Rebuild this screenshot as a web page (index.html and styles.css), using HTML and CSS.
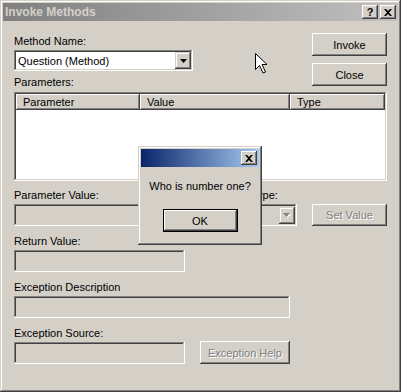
FILE: index.html
```html
<!DOCTYPE html>
<html lang="en">
<head>
  <meta charset="UTF-8" />
  <title>Invoke Methods</title>
  <link rel="stylesheet" href="styles.css">
</head>
<body>
  <div class="window">
    <div class="titlebar">
      <span class="title">Invoke Methods</span>
      <div class="capBtns">
        <span class="capBtn help">?</span>
        <span class="capBtn">
          <svg width="8" height="7" viewBox="0 0 8 7"><path d="M0 0h2l2 2 2-2h2L5 3.5 8 7H6L4 5 2 7H0l3-3.5z" fill="#000"/></svg>
        </span>
      </div>
    </div>

    <div class="content">
      <div class="topRow">
        <div class="topLeft">
          <span class="lbl">Method Name:</span>
          <div class="combo method">
            <span class="comboText">Question (Method)</span>
            <span class="dropBtn"><svg width="7" height="4" viewBox="0 0 7 4"><path d="M0 0h7L3.5 4z" fill="#000"/></svg></span>
          </div>
          <span class="lbl paramsLbl">Parameters:</span>
        </div>
        <div class="topRight">
          <button class="btn">Invoke</button>
          <button class="btn">Close</button>
        </div>
      </div>

      <div class="listview">
        <div class="lvHeader">
          <span class="lvCol colParam">Parameter</span>
          <span class="lvCol colValue">Value</span>
          <span class="lvCol colType">Type</span>
        </div>
      </div>

      <div class="row valueRow">
        <div class="group">
          <span class="lbl">Parameter Value:</span>
          <div class="field paramField"></div>
        </div>
        <div class="group typeGroup">
          <span class="lbl">Type:</span>
          <div class="combo typeCombo">
            <span class="comboText"></span>
            <span class="dropBtn"><svg width="8" height="5" viewBox="0 0 8 5"><path d="M1 1h7L4.5 5z" fill="#fff"/><path d="M0 0h7L3.5 4z" fill="#808080"/></svg></span>
          </div>
        </div>
        <button class="btn disabled pushRight">Set Value</button>
      </div>

      <div class="row">
        <div class="group">
          <span class="lbl">Return Value:</span>
          <div class="field shortField"></div>
        </div>
      </div>

      <div class="row">
        <div class="group">
          <span class="lbl">Exception Description</span>
          <div class="field longField"></div>
        </div>
      </div>

      <div class="row">
        <div class="group">
          <span class="lbl">Exception Source:</span>
          <div class="field shortField"></div>
        </div>
        <button class="btn disabled helpBtn">Exception Help</button>
      </div>
    </div>

    <div class="msgbox">
      <div class="msgTitle">
        <span class="capBtn">
          <svg width="8" height="7" viewBox="0 0 8 7"><path d="M0 0h2l2 2 2-2h2L5 3.5 8 7H6L4 5 2 7H0l3-3.5z" fill="#000"/></svg>
        </span>
      </div>
      <div class="msgText">Who is number one?</div>
      <button class="btn okBtn">OK</button>
    </div>

    <svg class="cursor" width="13" height="21" viewBox="0 0 13 21">
      <path d="M0.5 0.5v16l4-4 3.5 7.5 2.5-1-3.5-7.5h5z" fill="#fff" stroke="#000" stroke-width="1"/>
    </svg>
  </div>
</body>
</html>
```

FILE: styles.css
```css
* {
  box-sizing: border-box;
}

body {
  margin: 0;
  font-family: "Liberation Sans", Arial, sans-serif;
  font-size: 11px;
  color: #000;
  background-color: #d4d0c8;
}

/* bevels */
.window,
.msgbox {
  box-shadow: inset -1px -1px #404040, inset 1px 1px #d4d0c8, inset -2px -2px #808080, inset 2px 2px #fff;
}

.window {
  position: relative;
  width: 401px;
  height: 392px;
  padding: 3px;
  background-color: #d4d0c8;
}

.titlebar {
  display: flex;
  justify-content: space-between;
  align-items: flex-start;
  height: 18px;
  padding: 2px 2px 0 2px;
  background: linear-gradient(to right, #808080, #c0c0c0);
}
.title {
  color: #d4d0c8;
  font-weight: bold;
  font-size: 12px;
  line-height: 14px;
}
.capBtns {
  display: flex;
  gap: 2px;
}
.capBtn {
  display: flex;
  align-items: center;
  justify-content: center;
  width: 16px;
  height: 14px;
  background-color: #d4d0c8;
  box-shadow: inset -1px -1px #404040, inset 1px 1px #fff, inset -2px -2px #808080;
}
.capBtn.help {
  font-weight: bold;
  font-size: 11px;
  line-height: 14px;
}

.content {
  padding: 0 11px;
}

.lbl {
  display: block;
  height: 13px;
  line-height: 13px;
  white-space: nowrap;
}

.topRow {
  display: flex;
  justify-content: space-between;
  align-items: flex-start;
}
.topLeft {
  padding-top: 14px;
}
.topRight {
  display: flex;
  flex-direction: column;
  gap: 7px;
  padding-top: 12px;
}
.paramsLbl {
  margin-top: 5px;
}

.combo {
  display: flex;
  align-items: center;
  height: 21px;
  margin-top: 2px;
  padding: 2px;
  background-color: #fff;
  box-shadow: inset -1px -1px #fff, inset 1px 1px #808080, inset -2px -2px #d4d0c8, inset 2px 2px #404040;
}
.combo.method {
  width: 179px;
}
.comboText {
  flex: 1;
  padding-left: 2px;
  white-space: nowrap;
}
.dropBtn {
  display: flex;
  align-items: center;
  justify-content: center;
  width: 16px;
  height: 17px;
  background-color: #d4d0c8;
  box-shadow: inset -1px -1px #404040, inset 1px 1px #d4d0c8, inset -2px -2px #808080, inset 2px 2px #fff;
}

.btn {
  width: 75px;
  height: 23px;
  padding: 0;
  border: none;
  font: inherit;
  color: #000;
  background-color: #d4d0c8;
  box-shadow: inset -1px -1px #404040, inset 1px 1px #fff, inset -2px -2px #808080, inset 2px 2px #d4d0c8;
}
.btn.disabled {
  color: #808080;
  text-shadow: 1px 1px #fff;
}

.listview {
  height: 89px;
  margin-top: 3px;
  padding: 2px;
  background-color: #fff;
  box-shadow: inset -1px -1px #fff, inset 1px 1px #808080, inset -2px -2px #d4d0c8, inset 2px 2px #404040;
}
.lvHeader {
  display: flex;
  height: 16px;
}
.lvCol {
  height: 16px;
  padding-left: 7px;
  line-height: 16px;
  background-color: #d4d0c8;
  box-shadow: inset -1px -1px #404040, inset 1px 1px #fff, inset -2px -2px #808080;
}
.colParam {
  width: 124px;
}
.colValue {
  width: 150px;
}
.colType {
  width: 95px;
}

.row {
  display: flex;
  align-items: flex-end;
  margin-top: 9px;
}
.valueRow {
  margin-top: 8px;
}
.group .lbl {
  margin-bottom: 2px;
}

.field {
  height: 22px;
  background-color: #d4d0c8;
  box-shadow: inset -1px -1px #fff, inset 1px 1px #808080, inset -2px -2px #d4d0c8, inset 2px 2px #404040;
}
.paramField {
  width: 228px;
}
.shortField {
  width: 171px;
}
.longField {
  width: 276px;
}

.typeGroup {
  margin-left: 9px;
}
.combo.typeCombo {
  width: 46px;
  height: 22px;
  margin-top: 0;
  background-color: #d4d0c8;
}
.pushRight {
  margin-left: auto;
  height: 22px;
}
.helpBtn {
  width: 90px;
  margin-left: 15px;
}

/* message box over the dialog */
.msgbox {
  position: absolute;
  left: 138px;
  top: 146px;
  display: flex;
  flex-direction: column;
  align-items: center;
  width: 124px;
  height: 99px;
  padding: 3px;
  background-color: #d4d0c8;
}
.msgTitle {
  display: flex;
  justify-content: flex-end;
  align-self: stretch;
  height: 18px;
  padding: 2px 2px 0 2px;
  background: linear-gradient(to right, #0a246a, #a6caf0);
}
.msgText {
  margin-top: 13px;
  line-height: 13px;
  white-space: nowrap;
}
.okBtn {
  margin-top: 16px;
  box-shadow: inset 0 0 0 1px #000, inset -2px -2px #404040, inset 2px 2px #fff, inset -3px -3px #808080;
}

.cursor {
  position: absolute;
  left: 255px;
  top: 53px;
}
```
